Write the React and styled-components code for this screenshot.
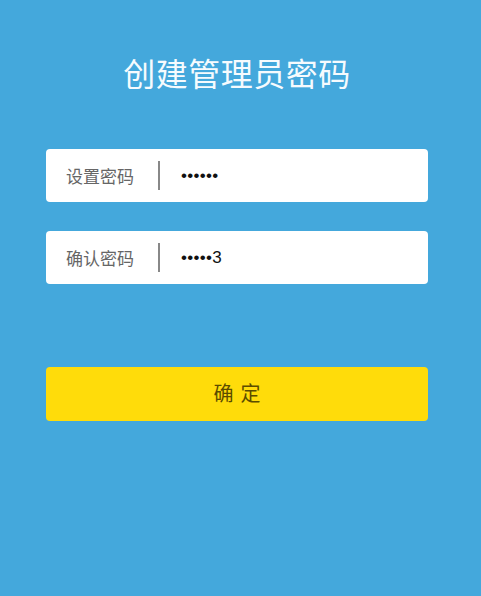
import React from "react";
import styled, { createGlobalStyle } from "styled-components";

const Global = createGlobalStyle`
  html, body { margin: 0; padding: 0; }
  body {
    background: #44a8dc;
    font-family: "Noto Sans CJK SC", "Liberation Sans", sans-serif;
  }
`;

const Page = styled.div`
  width: 481px;
  height: 596px;
  background: #44a8dc;
  box-sizing: border-box;
  padding: 49px 53px 0 46px;
  display: flex;
  flex-direction: column;
`;

const Title = styled.h1`
  margin: 0;
  text-align: center;
  color: #f6fbfe;
  font-size: 32px;
  font-weight: 400;
  line-height: 46px;
  letter-spacing: 0.5px;
`;

const Form = styled.div`
  margin-top: 54px;
  display: flex;
  flex-direction: column;
  gap: 29px;
`;

const Field = styled.div`
  height: 53px;
  background: #ffffff;
  border-radius: 4px;
  display: flex;
  align-items: center;
  padding-left: 20px;
`;

const Label = styled.span`
  font-size: 17px;
  color: #666666;
  width: 92px;
  line-height: 22px;
`;

const Divider = styled.span`
  width: 2px;
  height: 29px;
  background: #888888;
  margin-right: 21px;
`;

const Value = styled.span`
  font-family: "Liberation Sans", sans-serif;
  font-size: 17px;
  color: #111111;
  letter-spacing: 0.3px;
`;

const Button = styled.button`
  margin-top: 83px;
  height: 54px;
  border: none;
  border-radius: 4px;
  background: #ffdc0a;
  color: #5b4c00;
  font-family: "Noto Sans CJK SC", sans-serif;
  font-size: 20px;
  letter-spacing: 7px;
  padding: 0 0 4px 7px;
`;

export default function App() {
  return (
    <>
      <Global />
      <Page>
        <Title>创建管理员密码</Title>
        <Form>
          <Field>
            <Label>设置密码</Label>
            <Divider />
            <Value>••••••</Value>
          </Field>
          <Field>
            <Label>确认密码</Label>
            <Divider />
            <Value>•••••3</Value>
          </Field>
        </Form>
        <Button>确定</Button>
      </Page>
    </>
  );
}
